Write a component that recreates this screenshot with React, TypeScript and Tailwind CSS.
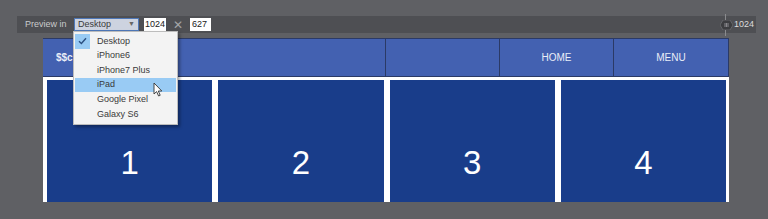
export default function App() {
  const devices = ["Desktop", "iPhone6", "iPhone7 Plus", "iPad", "Google Pixel", "Galaxy S6"];

  return (
    <div className="relative w-[768px] h-[219px] overflow-hidden bg-[#5f6064] pt-[16px] pl-[17px] font-['Liberation_Sans',Arial,sans-serif]">
      {/* Toolbar */}
      <div className="relative flex h-[17px] w-[739px] items-center bg-[#4e4f53] text-[9px]">
        <span className="ml-[8px] w-[49px] text-[#c9cacc]">Preview in</span>
        <div className="flex h-[13px] w-[65px] items-center justify-between border border-[#4f78b8] bg-[#cdd3e0] px-[3px] text-[#3a3a3a]">
          <span>Desktop</span>
          <span className="text-[7px] text-[#666]">▼</span>
        </div>
        <div className="ml-[5px] flex h-[13px] w-[22px] items-center justify-center bg-white text-[#222]">1024</div>
        <span className="mx-[7px] text-[12px] leading-none font-light text-[#a4a5a8]">✕</span>
        <div className="flex h-[13px] w-[21px] items-center bg-white pl-[2px] text-[#222]">627</div>
        <div className="flex-1" />
        <div className="relative mr-[2px] flex items-center">
          <div className="absolute left-[5px] top-[-4px] h-[22px] w-px bg-[#8a8b8e]" />
          <svg width="13" height="10" viewBox="0 0 13 10" className="relative">
            <polygon points="3,0 10,0 13,5 10,10 3,10 0,5" fill="#3c3d40" stroke="#6a6b6e" strokeWidth="0.8" />
            <line x1="5" y1="3" x2="5" y2="7" stroke="#9a9b9e" strokeWidth="0.8" />
            <line x1="6.5" y1="3" x2="6.5" y2="7" stroke="#9a9b9e" strokeWidth="0.8" />
            <line x1="8" y1="3" x2="8" y2="7" stroke="#9a9b9e" strokeWidth="0.8" />
          </svg>
          <span className="ml-px text-[9px] text-[#dcdcdc]">1024</span>
        </div>
      </div>

      {/* Preview frame */}
      <div className="ml-[26px] mt-[5px] h-[164px] w-[686px] overflow-hidden border-t border-[#2b3a66] bg-white">
        <div className="flex h-[38px] border-b border-[#2b3a66] bg-[#4361b1] text-[10px] text-[#e9edf7]">
          <div className="flex w-[343px] items-center border-r border-[#2b3a66] pl-[13px] font-bold">$$cpTitle$$</div>
          <div className="w-[114px] border-r border-[#2b3a66]" />
          <div className="flex w-[114px] items-center justify-center border-r border-[#2b3a66]">HOME</div>
          <div className="flex flex-1 items-center justify-center border-r border-[#2b3a66]">MENU</div>
        </div>
        <div className="grid grid-cols-4 gap-[6px] pl-[4px] pr-[3px] pt-[3px]">
          {[1, 2, 3, 4].map((n) => (
            <div key={n} className="flex h-[166px] items-center justify-center bg-[#193d8a] text-[33px] text-white">
              {n}
            </div>
          ))}
        </div>
      </div>

      {/* Dropdown */}
      <div className="absolute left-[73px] top-[31px] w-[105px] border border-[#bcbcbc] bg-[#f3f3f3] pb-[2px] pt-[2px] text-[9px] text-[#3a3a3a] shadow-[2px_2px_3px_rgba(0,0,0,0.35)]">
        {devices.map((d) => (
          <div key={d} className={`mx-px flex h-[14.6px] items-center ${d === "iPad" ? "bg-[#99cbf4]" : ""}`}>
            <div className={`flex h-full w-[15px] items-center justify-center ${d === "Desktop" ? "bg-[#99cbf4]" : ""}`}>
              {d === "Desktop" && (
                <svg width="9" height="8" viewBox="0 0 9 8">
                  <path d="M1 4.2 L3.4 6.5 L8 1.2" fill="none" stroke="#2b4f80" strokeWidth="1.4" />
                </svg>
              )}
            </div>
            <span className="ml-[7px]">{d}</span>
          </div>
        ))}
      </div>

      {/* Cursor */}
      <svg className="absolute left-[153px] top-[82px]" width="10" height="15" viewBox="0 0 10 15">
        <path d="M1 1 L1 12 L3.6 9.6 L5.6 14 L7.2 13.3 L5.3 9 L8.8 9 Z" fill="#ffffff" stroke="#333" strokeWidth="0.9" strokeLinejoin="round" />
      </svg>
    </div>
  );
}
